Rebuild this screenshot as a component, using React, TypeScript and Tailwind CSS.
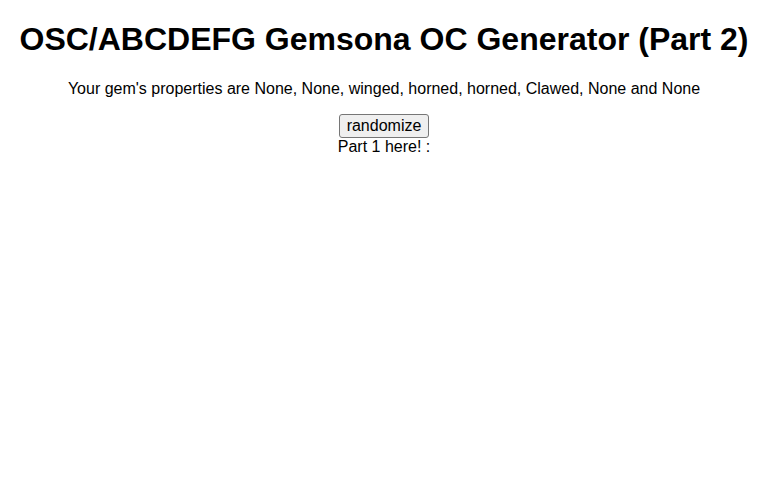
import { useState } from 'react'

const traits = [
  ['None', 'Round', 'Pointed'],
  ['None', 'Striped', 'Spotted'],
  ['winged', 'finned', 'None'],
  ['horned', 'None', 'antlered'],
  ['horned', 'tusked', 'None'],
  ['Clawed', 'None', 'Webbed'],
  ['None', 'Tailed', 'Spiked'],
  ['None', 'Glowing', 'Crystal'],
]

const pick = (list: string[]) => list[Math.floor(Math.random() * list.length)]

export default function App() {
  const [props, setProps] = useState(traits.map((t) => t[0]))

  const sentence =
    props.slice(0, -1).join(', ') + ' and ' + props[props.length - 1]

  return (
    <div className="text-center text-black font-['Liberation_Sans',Arial,sans-serif] text-base leading-[1.15]">
      <h1 className="mt-[21px] mb-[22px] text-[32px] font-bold leading-[37px]">
        OSC/ABCDEFG Gemsona OC Generator (Part 2)
      </h1>
      <p className="my-4 leading-[18px]">Your gem's properties are {sentence}</p>
      <button
        onClick={() => setProps(traits.map(pick))}
        className="rounded-[3px] border border-[#767676] bg-[#efefef] px-[7px] py-[2px] text-base leading-[18px] text-black"
      >
        randomize
      </button>
      <br />
      <span className="leading-[18px]">Part 1 here! :</span>
    </div>
  )
}
